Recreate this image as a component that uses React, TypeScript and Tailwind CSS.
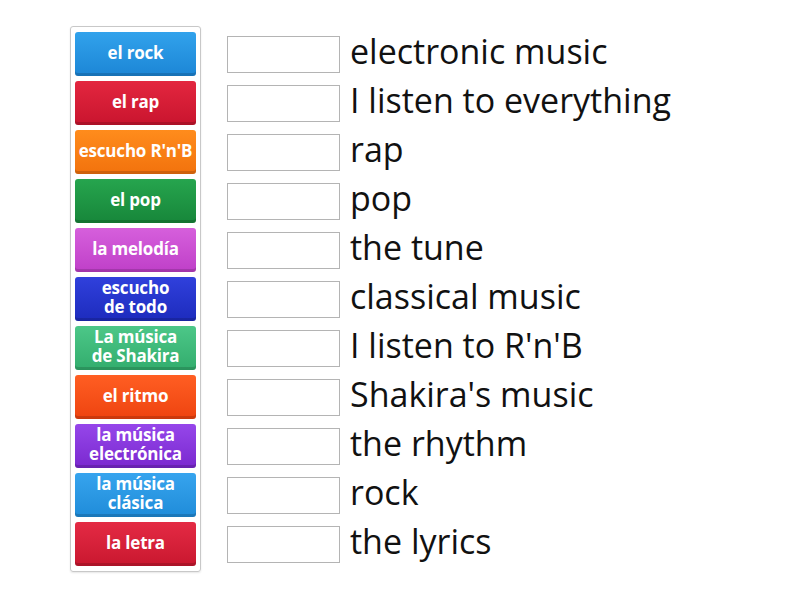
const TILES: { label: string[]; cls: string }[] = [
  { label: ["el rock"], cls: "from-[#31a2ec] to-[#1c86d6]" },
  { label: ["el rap"], cls: "from-[#e3263f] to-[#c9142e]" },
  { label: ["escucho R'n'B"], cls: "from-[#ff8c1c] to-[#f2720c]" },
  { label: ["el pop"], cls: "from-[#26a54e] to-[#17863a]" },
  { label: ["la melodía"], cls: "from-[#d65fdc] to-[#bf3fc8]" },
  { label: ["escucho", "de todo"], cls: "from-[#3040dc] to-[#1d2bbd]" },
  { label: ["La música", "de Shakira"], cls: "from-[#4cc788] to-[#32ad6d]" },
  { label: ["el ritmo"], cls: "from-[#ff5e22] to-[#ee430f]" },
  { label: ["la música", "electrónica"], cls: "from-[#9646ea] to-[#7a28cf]" },
  { label: ["la música", "clásica"], cls: "from-[#36a4ee] to-[#1f8cd9]" },
  { label: ["la letra"], cls: "from-[#e42a44] to-[#c9172f]" },
];

const ANSWERS = [
  "electronic music",
  "I listen to everything",
  "rap",
  "pop",
  "the tune",
  "classical music",
  "I listen to R'n'B",
  "Shakira's music",
  "the rhythm",
  "rock",
  "the lyrics",
];

export default function App() {
  return (
    <div
      className="flex h-[600px] w-[800px] items-start bg-white pl-[70px] pt-[26px]"
      style={{ fontFamily: '"Open Sans", "Liberation Sans", sans-serif' }}
    >
      {/* Tiles */}
      <div className="flex flex-col gap-[5px] rounded-[3px] border border-[#c8c8c8] px-[4px] py-[5px] shadow-[0_1px_2px_rgba(0,0,0,0.1)]">
        {TILES.map((t) => (
          <div
            key={t.label.join(" ")}
            className={`flex h-[44px] w-[121px] flex-col items-center justify-center rounded-[3px] bg-gradient-to-b ${t.cls} pb-[4px] text-center text-[17px] font-bold leading-[19px] tracking-[-0.2px] text-white shadow-[inset_0_-3px_0_rgba(0,0,0,0.15)]`}
          >
            {t.label.map((l) => (
              <span key={l} className="whitespace-nowrap">{l}</span>
            ))}
          </div>
        ))}
      </div>

      {/* Answers */}
      <div className="ml-[26px] flex flex-col gap-[5px] pt-[6px]">
        {ANSWERS.map((a) => (
          <div key={a} className="flex h-[44px] items-center">
            <div className="h-[37px] w-[113px] border border-[#b4b4b4] bg-white" />
            <span className="ml-[10px] pb-[7px] text-[34px] leading-none text-[#111]">{a}</span>
          </div>
        ))}
      </div>
    </div>
  );
}
